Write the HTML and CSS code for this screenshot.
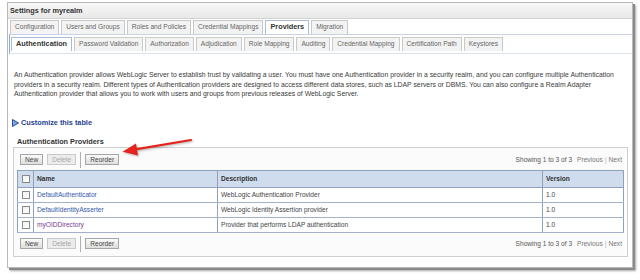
FILE: index.html
```html
<!DOCTYPE html>
<html lang="en">
<head>
<meta charset="utf-8">
<title>Settings for myrealm</title>
<link rel="stylesheet" href="styles.css">
</head>
<body>
<div class="panel">
  <div class="panel-title">Settings for myrealm</div>
  <div class="tabs tabs-main">
    <span class="tab">Configuration</span>
    <span class="tab">Users and Groups</span>
    <span class="tab">Roles and Policies</span>
    <span class="tab">Credential Mappings</span>
    <span class="tab active">Providers</span>
    <span class="tab">Migration</span>
  </div>
  <div class="tabs tabs-sub">
    <span class="tab active">Authentication</span>
    <span class="tab">Password Validation</span>
    <span class="tab">Authorization</span>
    <span class="tab">Adjudication</span>
    <span class="tab">Role Mapping</span>
    <span class="tab">Auditing</span>
    <span class="tab">Credential Mapping</span>
    <span class="tab">Certification Path</span>
    <span class="tab">Keystores</span>
  </div>
  <p class="intro">An Authentication provider allows WebLogic Server to establish trust by validating a user. You must have one Authentication provider in a security realm, and you can configure multiple Authentication<br>providers in a security realm. Different types of Authentication providers are designed to access different data stores, such as LDAP servers or DBMS. You can also configure a Realm Adapter<br>Authentication provider that allows you to work with users and groups from previous releases of WebLogic Server.</p>
  <div class="customize">
    <svg class="customize-icon" width="7" height="8" viewBox="0 0 7 8"><polygon points="0.5,0.5 6.5,4 0.5,7.5" fill="#7fa6dc" stroke="#2a4f96" stroke-width="1"/></svg>
    <a class="customize-link">Customize this table</a>
  </div>
  <div class="section-title">Authentication Providers</div>
  <div class="table-box">
    <div class="toolbar">
      <div class="buttons">
        <span class="btn">New</span>
        <span class="btn disabled">Delete</span>
        <span class="sep"></span>
        <span class="btn">Reorder</span>
      </div>
      <div class="paging">Showing 1 to 3 of 3 <span class="pg">Previous</span><span class="bar">|</span><span class="pg">Next</span></div>
    </div>
    <table class="grid">
      <colgroup>
        <col class="c-check"><col class="c-name"><col class="c-desc"><col class="c-ver">
      </colgroup>
      <thead>
        <tr><th class="chk"><span class="box"></span></th><th>Name</th><th>Description</th><th>Version</th></tr>
      </thead>
      <tbody>
        <tr><td class="chk"><span class="box"></span></td><td><a class="lnk">DefaultAuthenticator</a></td><td>WebLogic Authentication Provider</td><td>1.0</td></tr>
        <tr><td class="chk"><span class="box"></span></td><td><a class="lnk">DefaultIdentityAsserter</a></td><td>WebLogic Identity Assertion provider</td><td>1.0</td></tr>
        <tr><td class="chk"><span class="box"></span></td><td><a class="lnk visited">myOIDDirectory</a></td><td>Provider that performs LDAP authentication</td><td>1.0</td></tr>
      </tbody>
    </table>
    <div class="toolbar toolbar-bottom">
      <div class="buttons">
        <span class="btn">New</span>
        <span class="btn disabled">Delete</span>
        <span class="sep"></span>
        <span class="btn">Reorder</span>
      </div>
      <div class="paging">Showing 1 to 3 of 3 <span class="pg">Previous</span><span class="bar">|</span><span class="pg">Next</span></div>
    </div>
  </div>
</div>
<svg class="callout" width="640" height="280" viewBox="0 0 640 280">
  <line x1="191" y1="140" x2="134" y2="149.7" stroke="#e5231c" stroke-width="2.2" stroke-linecap="round"/>
  <polygon points="122.5,151.8 136,143.6 138,155.6" fill="#e5231c"/>
</svg>
</body>
</html>
```
FILE: styles.css
```css
* { box-sizing: border-box; }
html, body { margin: 0; padding: 0; background: #fff; }
body {
  font-family: "Liberation Sans", Arial, sans-serif;
  font-size: 6.6px;
  color: #333;
  padding-top: 2px;
  position: relative;
  width: 640px;
  height: 280px;
  overflow: hidden;
}
.panel {
  margin-left: 7px;
  width: 626px;
  height: 266px;
  border: 1px solid #b8b8b8;
  background: #fff;
  box-shadow: 2px 2px 0 #8a8a8a, 3px 3px 2px rgba(0,0,0,0.35);
}
.panel-title {
  height: 16px;
  line-height: 16px;
  padding-left: 2px;
  font-weight: bold;
  font-size: 7.3px;
  color: #333;
  background: linear-gradient(#f8f8f8, #e8e8e8);
  border-bottom: 1px solid #d2d2d2;
}
.tabs { display: flex; gap: 2px; }
.tabs-main { padding: 1px 0 0 2px; }
.tab {
  height: 14px;
  line-height: 12px;
  padding: 0 4px;
  border: 1px solid #c9c9c9;
  border-bottom: none;
  background: #f3f3f3;
  color: #666;
  white-space: nowrap;
}
.tab.active {
  background: #fff;
  font-weight: bold;
  font-size: 7.3px;
  color: #333;
  border-color: #a9bcd8;
}
.tabs-sub {
  margin: 0 0 0 1px;
  border-top: 1px solid #c6d3e7;
  border-left: 1px solid #8ea8cf;
  border-bottom: 1px solid #dce4f0;
  padding: 2px 0 2px 1px;
}
.intro {
  margin: 16px 0 0;
  padding-left: 6px;
  font-size: 6.85px;
  line-height: 9.5px;
  color: #3a3a3a;
  white-space: nowrap;
}
.customize {
  display: flex;
  align-items: center;
  gap: 2px;
  margin: 19px 0 0 4px;
  height: 10px;
}
.customize-icon { display: block; }
.customize-link {
  font-weight: bold;
  font-size: 7.3px;
  color: #1f3f8f;
}
.section-title {
  margin: 9px 0 0 9px;
  height: 10px;
  line-height: 10px;
  font-weight: bold;
  font-size: 7.3px;
  color: #333;
}
.table-box {
  margin: 0 4px 0 5px;
  height: 110px;
  border: 1px solid #cfcfcf;
  background: #fbfbfb;
}
.toolbar {
  display: flex;
  justify-content: space-between;
  align-items: center;
  height: 22px;
  padding: 2px 5px 0 6px;
}
.toolbar-bottom { height: 20px; padding-top: 2px; }
.buttons { display: flex; align-items: center; gap: 4px; }
.btn {
  height: 11px;
  line-height: 9px;
  padding: 0 4px;
  border: 1px solid #a6a6a6;
  background: linear-gradient(#fafafa, #dedede);
  color: #444;
}
.btn.disabled {
  border-color: #cacaca;
  background: #ececec;
  color: #a8a8a8;
}
.sep {
  width: 1px;
  height: 16px;
  background: #b0b0b0;
}
.paging { color: #555; display: flex; align-items: center; }
.pg { color: #777; margin-left: 5px; }
.bar { color: #aaa; margin-left: 2px; margin-right: -3px; }
.grid {
  margin: 0 3px;
  width: 606px;
  border-collapse: collapse;
  table-layout: fixed;
  border: 1px solid #8ea1bd;
  background: #fff;
}
.c-check { width: 16px; }
.c-name { width: 184px; }
.c-desc { width: 325px; }
.c-ver { width: 81px; }
.grid th {
  height: 17px;
  background: #cfdcee;
  text-align: left;
  font-weight: bold;
  color: #333;
  padding: 0 3px;
  border: 1px solid #8ea1bd;
}
.grid td {
  height: 15px;
  padding: 0 3px;
  color: #444;
  border: 1px solid #a3b2c9;
  border-left-color: #8ea1bd;
  border-right-color: #8ea1bd;
}
.grid .chk { padding: 0; text-align: center; }
.box {
  display: inline-block;
  width: 8px;
  height: 8px;
  border: 1px solid #8a8a8a;
  background: linear-gradient(#f2f2f2, #ffffff);
  vertical-align: middle;
}
.lnk { color: #3557a8; }
.lnk.visited { color: #7b3b8e; }
.callout {
  position: absolute;
  left: 0;
  top: 0;
  pointer-events: none;
  filter: drop-shadow(1px 1px 1px rgba(0,0,0,0.3));
}
```
